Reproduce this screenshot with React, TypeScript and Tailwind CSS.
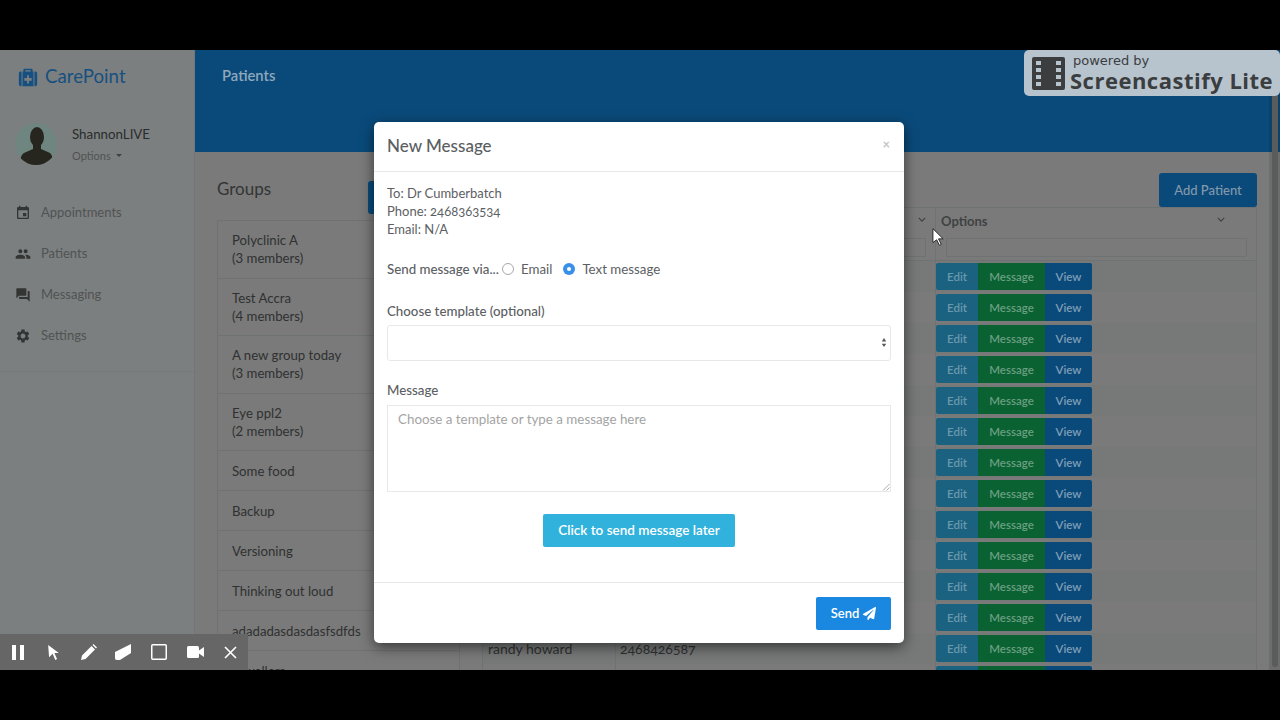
const groups = [
  { name: 'Polyclinic A', count: '(3 members)' },
  { name: 'Test Accra', count: '(4 members)' },
  { name: 'A new group today', count: '(3 members)' },
  { name: 'Eye ppl2', count: '(2 members)' },
  { name: 'Some food' },
  { name: 'Backup' },
  { name: 'Versioning' },
  { name: 'Thinking out loud' },
  { name: 'adadadasdasdasfsdfds' },
  { name: 'Jewellers' },
];

const rows = Array.from({ length: 14 }, (_, i) => i);

function Sidebar() {
  return (
    <aside className="w-[195px] shrink-0 bg-[#7c7f7f] border-r border-[#747777] flex flex-col">
      <div className="h-[53px] flex items-center gap-[6px] pl-[17px]">
        <svg viewBox="0 0 24 24" className="w-[22px] h-[22px] text-[#165080]" fill="currentColor">
          <path d="M8 3h8a1 1 0 0 1 1 1v2h3a2 2 0 0 1 2 2v12a2 2 0 0 1-2 2h-1V6h-1v16H6V6H5v16H4a2 2 0 0 1-2-2V8a2 2 0 0 1 2-2h3V4a1 1 0 0 1 1-1zm1 1.500V6h6V4.500zM11 10v3H8v3h3v3h2v-3h3v-3h-3v-3z" fillRule="evenodd" />
        </svg>
        <span className="text-[18.700px] text-[#165080]">CarePoint</span>
      </div>
      <div className="flex items-center gap-[15px] pl-[15px] mt-[20px]">
        <div className="w-[42px] h-[42px] rounded-full bg-[#6f8580] overflow-hidden">
          <svg viewBox="0 0 42 42" className="w-full h-full" fill="#26261f">
            <ellipse cx="22" cy="14" rx="7" ry="10" />
            <path d="M18 22h8v4l9 4c2 2 3 5 3 12H5c0-6 1-10 4-12l9-4z" />
          </svg>
        </div>
        <div className="flex flex-col">
          <span className="text-[13.300px] leading-[18px] mt-[1px] text-[#2a2c2c]">ShannonLIVE</span>
          <span className="text-[11px] leading-[18px] mt-[4px] text-[#505353] flex items-center gap-[5px]">
            Options
            <span className="w-0 h-0 border-x-[3px] border-x-transparent border-t-[3px] border-t-[#3f4242]" />
          </span>
        </div>
      </div>
      <nav className="mt-[27px] flex flex-col text-[13px] text-[#505353]">
        <a className="h-[41px] flex items-center gap-[10px] pl-[15px]">
          <svg viewBox="0 0 24 24" className="w-[16px] h-[16px] text-[#333535]" fill="currentColor">
            <path d="M17 12h-5v5h5v-5zM16 1v2H8V1H6v2H5c-1.110 0-1.990.9-1.990 2L3 19c0 1.100.890 2 2 2h14c1.100 0 2-.9 2-2V5c0-1.100-.900-2-2-2h-1V1h-2zm3 18H5V8h14v11z" />
          </svg>
          Appointments
        </a>
        <a className="h-[41px] flex items-center gap-[10px] pl-[15px]">
          <svg viewBox="0 0 24 24" className="w-[16px] h-[16px] text-[#333535]" fill="currentColor">
            <path d="M16 11a3 3 0 1 0 0-6 3 3 0 0 0 0 6zm-8 0a3 3 0 1 0 0-6 3 3 0 0 0 0 6zm0 2c-2.300 0-7 1.200-7 3.500V19h14v-2.500C15 14.200 10.300 13 8 13zm8 0h-1c1.200.9 2 2 2 3.500V19h6v-2.500c0-2.300-4.700-3.500-7-3.500z" />
          </svg>
          Patients
        </a>
        <a className="h-[41px] flex items-center gap-[10px] pl-[15px]">
          <svg viewBox="0 0 24 24" className="w-[16px] h-[16px] text-[#333535]" fill="currentColor">
            <path d="M21 6h-2v9H6v2c0 .6.400 1 1 1h11l4 4V7c0-.6-.400-1-1-1zm-4 6V3c0-.6-.400-1-1-1H3c-.6 0-1 .4-1 1v14l4-4h10c.6 0 1-.4 1-1z" />
          </svg>
          Messaging
        </a>
        <a className="h-[41px] flex items-center gap-[10px] pl-[15px]">
          <svg viewBox="0 0 24 24" className="w-[16px] h-[16px] text-[#333535]" fill="currentColor">
            <path d="M19.140 12.940c.04-.3.06-.61.06-.94 0-.32-.02-.64-.07-.94l2.030-1.580c.18-.14.23-.41.12-.61l-1.920-3.320c-.12-.22-.37-.29-.59-.22l-2.390.96c-.5-.38-1.030-.7-1.620-.94l-.36-2.540c-.04-.24-.24-.41-.48-.41h-3.840c-.24 0-.43.17-.47.41l-.36 2.540c-.59.24-1.130.57-1.620.94l-2.390-.96c-.22-.08-.47 0-.59.22L2.740 8.870c-.12.21-.08.47.12.61l2.030 1.580c-.05.3-.09.63-.09.94s.02.64.07.94l-2.030 1.580c-.18.14-.23.41-.12.61l1.920 3.320c.12.22.37.29.59.22l2.390-.96c.5.38 1.030.7 1.620.94l.36 2.540c.05.24.24.41.48.41h3.840c.24 0 .44-.17.47-.41l.36-2.540c.59-.24 1.130-.56 1.620-.94l2.390.96c.22.08.47 0 .59-.22l1.920-3.320c.12-.22.07-.47-.12-.61l-2.010-1.580zM12 15.600c-1.980 0-3.600-1.620-3.600-3.600s1.620-3.600 3.600-3.600 3.600 1.620 3.600 3.600-1.620 3.600-3.600 3.600z" />
          </svg>
          Settings
        </a>
      </nav>
      <div className="mt-[15px] border-t border-[#757878]" />
    </aside>
  );
}

function GroupsColumn() {
  return (
    <div className="w-[243px] shrink-0">
      <div className="h-[68px] pt-[27px] flex items-start justify-between">
        <h2 className="text-[17px] leading-[20px] text-[#333535]">Groups</h2>
        <button className="w-[92px] h-[33px] mt-[2px] bg-[#0a4a7a] rounded-[3px]" />
      </div>
      <ul className="border border-[#6f7272] text-[13.200px] leading-[18px] text-[#2f3131]">
        {groups.map((g) => (
          <li key={g.name} className={`border-b border-[#6f7272] px-[14px] ${g.count ? 'py-[10.250px]' : 'py-[10.500px]'}`}>
            <div>{g.name}</div>
            {g.count && <div>{g.count}</div>}
          </li>
        ))}
      </ul>
    </div>
  );
}

function Chevron({ className }: { className: string }) {
  return (
    <svg viewBox="0 0 10 6" className={className} fill="none" stroke="#3f4242" strokeWidth="1.500">
      <path d="M1 1l4 4 4-4" />
    </svg>
  );
}

function PatientsTable() {
  return (
    <div className="flex-1 min-w-0 flex flex-col">
      <div className="h-[55px] pt-[21px] flex justify-end">
        <button className="w-[98px] h-[34px] pt-[1px] rounded-[3px] bg-[#0a4a7a] text-[13px] text-[#8399ab] font-medium">Add Patient</button>
      </div>
      <div className="flex-1 border border-[#6f7272] border-b-0 flex">
        <div className="w-[133px] shrink-0 border-r border-[#6f7272] flex flex-col">
          <div className="h-[53px] shrink-0 border-b border-[#6f7272]" />
          {rows.map((r) => (
            <div key={r} className={`h-[31px] shrink-0 flex items-center pl-[5px] text-[14px] text-[#2f3131] ${r % 2 === 0 ? 'bg-[#777878]' : 'bg-[#7a7a7a]'}`}>
              {r === 12 ? 'randy howard' : ''}
            </div>
          ))}
        </div>
        <div className="w-[320px] shrink-0 border-r border-[#6f7272] flex flex-col">
          <div className="h-[53px] shrink-0 border-b border-[#6f7272] relative">
            <Chevron className="absolute top-[9px] right-[9px] w-[8px] h-[5px]" />
            <div className="absolute left-0 right-[9px] top-[30px] h-[19px] border border-[#6f7272]" />
          </div>
          {rows.map((r) => (
            <div key={r} className={`h-[31px] shrink-0 flex items-center pl-[4px] text-[14px] oldstyle-nums text-[#2f3131] ${r % 2 === 0 ? 'bg-[#777878]' : 'bg-[#7a7a7a]'}`}>
              {r === 12 ? '2468426587' : ''}
            </div>
          ))}
        </div>
        <div className="flex-1 min-w-0 flex flex-col">
          <div className="h-[53px] shrink-0 border-b border-[#6f7272] px-[5px] relative">
            <div className="text-[13px] font-bold text-[#3f4242] pt-[4px] leading-[18px]">Options</div>
            <Chevron className="absolute top-[9px] right-[31px] w-[8px] h-[5px]" />
            <div className="h-[19px] mt-[8px] ml-[5px] mr-[4px] border border-[#6f7272]" />
          </div>
          <div className="flex flex-col">
            {rows.map((r) => (
              <div key={r} className={`h-[31px] shrink-0 flex items-center ${r % 2 === 0 ? 'bg-[#777878]' : 'bg-[#7a7a7a]'}`}>
                <div className="flex h-[27px] text-[11.500px] font-semibold">
                  <span className="w-[42px] flex items-center justify-center rounded-l-[2px] bg-[#1b6280] text-[#6a99ae]">Edit</span>
                  <span className="w-[67px] flex items-center justify-center bg-[#0a6131] text-[#6a9f82]">Message</span>
                  <span className="w-[47px] flex items-center justify-center rounded-r-[2px] bg-[#0a4a7a] text-[#7f9db6]">View</span>
                </div>
              </div>
            ))}
          </div>
        </div>
      </div>
    </div>
  );
}

function Modal() {
  return (
    <div className="absolute left-[374px] top-[72px] w-[530px] h-[521px] rounded-[5px] bg-white shadow-[0_4px_14px_rgba(0,0,0,0.55)] flex flex-col text-[#5c6063]">
      <div className="h-[50px] shrink-0 border-b border-[#e8e8e8] pl-[13px] pr-[14px] flex items-center justify-between">
        <h3 className="text-[17px] font-medium text-[#5a5e61] -mt-[1px]">New Message</h3>
        <span className="text-[13px] font-bold leading-none text-[#c4c4c4] -mt-[4px]">×</span>
      </div>
      <div className="flex-1 px-[13px] pt-[12px]">
        <div className="text-[13px] leading-[18px]">
          <div>To: Dr Cumberbatch</div>
          <div className="oldstyle-nums">Phone: 2468363534</div>
          <div>Email: N/A</div>
        </div>
        <div className="mt-[22px] h-[18px] flex items-center text-[13.300px] leading-[18px]">
          <span className="font-medium w-[115px] shrink-0 whitespace-nowrap">Send message via...</span>
          <span className="w-[12px] h-[12px] rounded-full border border-[#a9a9a9] bg-white" />
          <span className="ml-[7px]">Email</span>
          <span className="ml-[11px] w-[12px] h-[12px] rounded-full bg-[#3a8fe8] flex items-center justify-center">
            <span className="w-[4px] h-[4px] rounded-full bg-white" />
          </span>
          <span className="ml-[7px]">Text message</span>
        </div>
        <label className="block mt-[24px] text-[13.300px] leading-[18px] font-medium">Choose template (optional)</label>
        <div className="mt-[5px] h-[36px] rounded-[3px] border border-[#e8e8e8] relative">
          <svg viewBox="0 0 8 14" className="absolute right-[3px] top-[11px] w-[6px] h-[11px]" fill="#55595c">
            <path d="M4 1l3 4.500H1zM4 13L1 8.500h6z" />
          </svg>
        </div>
        <label className="block mt-[20px] text-[13.300px] leading-[18px] font-medium">Message</label>
        <div className="mt-[6px] h-[87px] border border-[#e8e8e8] relative px-[10px] pt-[4px] text-[13.360px] leading-[18px] text-[#a4a4a4]">
          Choose a template or type a message here
          <svg viewBox="0 0 8 8" className="absolute right-0 bottom-0 w-[8px] h-[8px]" fill="none" stroke="#8a8a8a" strokeWidth="0.700">
            <path d="M1 7.500L7.500 1M4.500 7.500L7.500 4.500" />
          </svg>
        </div>
        <div className="mt-[22px] flex justify-center">
          <button className="w-[192px] h-[33px] rounded-[2px] bg-[#31b2dc] text-white text-[13.500px] font-semibold">Click to send message later</button>
        </div>
      </div>
      <div className="h-[61px] shrink-0 border-t border-[#e8e8e8] pr-[13px] flex items-center justify-end">
        <button className="w-[75px] h-[33px] pt-[1px] rounded-[2px] bg-[#1a87e0] text-white text-[13px] font-semibold flex items-center justify-center gap-[4px]">
          Send
          <svg viewBox="0 0 512 512" className="w-[13px] h-[13px]" fill="white">
            <path d="M476 3.200L12.500 270.600c-18.100 10.400-15.800 35.600 2.200 43.200L121 358.400l287.300-253.200c5.500-4.900 13.300 2.600 8.600 8.300L176 407v80.500c0 23.600 28.500 32.900 42.500 15.800L282 426l124.600 52.200c14.200 6 30.400-2.900 33-18.200l72-432C515 7.800 493.300-6.800 476 3.200z" />
          </svg>
        </button>
      </div>
    </div>
  );
}

function Watermark() {
  return (
    <div className="absolute right-0 top-0 w-[256px] h-[46px] rounded-[5px] bg-[#b7c4ce] flex items-center pl-[8px] text-[#3b3d3f]">
      <svg viewBox="0 0 33 33" className="w-[33px] h-[33px] shrink-0" fill="#3b3d3f">
        <path fillRule="evenodd" d="M2 0h29a2 2 0 0 1 2 2v29a2 2 0 0 1-2 2H2a2 2 0 0 1-2-2V2a2 2 0 0 1 2-2zm2 4v4h5V4zm0 7v4h5v-4zm0 7v4h5v-4zm0 7v4h5v-4zM24 4v4h5V4zm0 7v4h5v-4zm0 7v4h5v-4zm0 7v4h5v-4z" />
      </svg>
      <div className="ml-[5px] flex flex-col -mt-[1px]">
        <span className="text-[13px] leading-[14px] pl-[3px] font-['DejaVu_Sans']">powered by</span>
        <span className="text-[22px] leading-[24px] font-bold font-['Open_Sans'] tracking-[0.5px] whitespace-nowrap">Screencastify Lite</span>
      </div>
    </div>
  );
}

function RecorderBar() {
  return (
    <div className="absolute left-0 bottom-0 w-[248px] h-[36px] bg-[#666666] flex items-center pl-[12px] text-white">
      <svg viewBox="0 0 12 15" className="w-[12px] h-[15px]" fill="white">
        <rect x="0" y="0" width="4" height="15" />
        <rect x="8" y="0" width="4" height="15" />
      </svg>
      <svg viewBox="0 0 14 18" className="ml-[23px] w-[13px] h-[16px]" fill="white"><path d="M1 1l12 9H8l3 7-2 1-3-7-4 4z" /></svg>
      <svg viewBox="0 0 16 16" className="ml-[21px] w-[16px] h-[16px]" fill="white">
        <path d="M0 16l1-4.500L10.500 2l3.500 3.500L4.500 15zM11.500 1l1-1 3.500 3.500-1 1z" />
      </svg>
      <svg viewBox="0 0 18 18" className="ml-[17px] w-[18px] h-[18px]" fill="white">
        <path d="M1 9L17 1v9L6 17H3c-1.500 0-2-1-2-2z" />
      </svg>
      <svg viewBox="0 0 16 16" className="ml-[19px] w-[16px] h-[16px]" fill="none" stroke="white" strokeWidth="1.500">
        <rect x="0.750" y="0.750" width="14.500" height="14.500" rx="1" />
      </svg>
      <svg viewBox="0 0 17 12" className="ml-[20px] w-[17px] h-[12px]" fill="white">
        <rect x="0" y="0" width="12" height="12" rx="1.500" />
        <path d="M12 4.500L17 1v10l-5-3.500z" />
      </svg>
      <svg viewBox="0 0 13 13" className="ml-[20px] w-[13px] h-[13px]" fill="none" stroke="white" strokeWidth="1.600">
        <path d="M1 1l11 11M12 1L1 12" />
      </svg>
    </div>
  );
}

function Cursor() {
  return (
    <svg viewBox="0 0 14 20" className="absolute left-[932px] top-[177px] w-[13px] h-[20px]" fill="white" stroke="#222" strokeWidth="1">
      <path d="M1 1v15l4-3 3 6 2-1-3-6h5z" />
    </svg>
  );
}

export default function App() {
  return (
    <div className="w-[1280px] h-[720px] bg-black py-[50px] font-['Lato','Liberation_Sans',sans-serif]">
      <div className="relative h-[620px] overflow-hidden flex bg-[#7a7a7a]">
        <Sidebar />
        <main className="flex-1 min-w-0 flex flex-col">
          <header className="h-[102px] shrink-0 bg-[#0a4a7a] pl-[27px] pt-[13px]">
            <span className="text-[14.800px] font-semibold text-[#8fa8bc]">Patients</span>
          </header>
          <div className="flex-1 min-h-0 flex gap-[22px] pl-[22px] pr-[23px] overflow-hidden">
            <GroupsColumn />
            <PatientsTable />
          </div>
        </main>
        <div className="absolute right-0 top-0 bottom-0 w-[11px] bg-black/10 flex justify-center py-[3px]">
          <div className="w-[6px] h-full rounded-full bg-[#5a5c5c]" />
        </div>
        <Modal />
        <Watermark />
        <RecorderBar />
        <Cursor />
      </div>
    </div>
  );
}
